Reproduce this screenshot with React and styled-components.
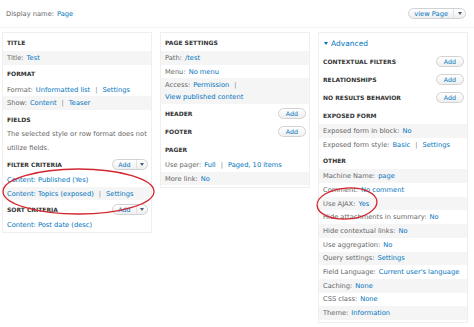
import React from "react";
import styled, { createGlobalStyle } from "styled-components";

const LINK = "#0074bd";

const GlobalStyle = createGlobalStyle`
  html, body {
    margin: 0;
    padding: 0;
    background: #fff;
  }
  body {
    font-family: "DejaVu Sans", Verdana, sans-serif;
    font-size: 6.7px;
    color: #666;
  }
`;

const Page = styled.div`
  position: relative;
  width: 474px;
  height: 327px;
  overflow: hidden;
`;

const TopBar = styled.div`
  display: flex;
  align-items: center;
  justify-content: space-between;
  height: 28px;
  padding: 0 8px 0 6px;
  border-bottom: 1px solid #f2f2f2;
  box-sizing: border-box;
`;

const Columns = styled.div`
  display: grid;
  grid-template-columns: repeat(3, 150px);
  column-gap: 8px;
  align-items: start;
  padding-left: 2px;
  margin-top: 4px;
`;

const Column = styled.section`
  border: 1px solid #efefef;
  background: #fff;
  padding-bottom: ${(p) => p.$pb || 0}px;
`;

const Heading = styled.div`
  display: flex;
  align-items: center;
  justify-content: space-between;
  height: 18px;
  padding: 0 3px 0 4px;
  font-size: 6px;
  font-weight: bold;
  color: #333;
  text-transform: uppercase;
`;

const Item = styled.div`
  min-height: 13.7px;
  box-sizing: border-box;
  line-height: 12px;
  padding: 0.85px 4px;
  background: ${(p) => (p.$alt ? "#f5f5f5" : "transparent")};
`;

const Description = styled.div`
  line-height: 13.5px;
  padding: 0 4px;
`;

const Value = styled.a`
  color: ${LINK};
  text-decoration: none;
  white-space: nowrap;
  margin-left: ${(p) => (p.$bare ? 0 : 3)}px;
`;

const Sep = styled.span`
  color: #888;
  margin: 0 5px;
`;

const Toggle = styled.div`
  display: flex;
  align-items: center;
  gap: 3px;
  height: 19px;
  padding: 1px 4px 0 5px;
  box-sizing: border-box;
  color: ${LINK};
  font-size: 7.5px;
`;

const Caret = styled.span`
  width: 0;
  height: 0;
  border-left: 2px solid transparent;
  border-right: 2px solid transparent;
  border-top: 3px solid ${(p) => p.$color || LINK};
`;

const Pill = styled.span`
  display: inline-flex;
  align-items: stretch;
  height: 11px;
  box-sizing: border-box;
  border: 1px solid #d2d2d2;
  border-radius: 6px;
  background: linear-gradient(#ffffff, #efefef);
  font-weight: normal;
  text-transform: none;
  font-size: ${(p) => p.$size || 6.3}px;
  color: ${LINK};
  overflow: hidden;
`;

const PillPart = styled.span`
  display: flex;
  align-items: center;
  padding: 0 ${(p) => p.$pad}px;
  & + & {
    border-left: 1px solid #e2e2e2;
  }
`;

const Annotations = styled.svg`
  position: absolute;
  left: 0;
  top: 0;
  pointer-events: none;
`;

const AddButton = ({ menu }) => (
  <Pill>
    <PillPart $pad={menu ? 5.5 : 7}>Add</PillPart>
    {menu && (
      <PillPart $pad={3}>
        <Caret $color="#4b5f73" />
      </PillPart>
    )}
  </Pill>
);

const Setting = ({ label, values = [], alt }) => (
  <Item $alt={alt}>
    {label && <span>{label}:</span>}
    {values.map((v, i) => (
      <React.Fragment key={v}>
        {i > 0 && <Sep>|</Sep>}
        <Value $bare={!label || i > 0}>{v}</Value>
      </React.Fragment>
    ))}
  </Item>
);

export default function App() {
  return (
    <Page>
      <GlobalStyle />
      <TopBar>
        <div>
          Display name:<Value>Page</Value>
        </div>
        <Pill $size={6.7}>
          <PillPart $pad={5}>view Page</PillPart>
          <PillPart $pad={3.5}>
            <Caret $color="#4b5f73" />
          </PillPart>
        </Pill>
      </TopBar>

      <Columns>
        <Column>
          <Heading>Title</Heading>
          <Setting label="Title" values={["Test"]} alt />
          <Heading>Format</Heading>
          <Setting label="Format" values={["Unformatted list", "Settings"]} />
          <Setting label="Show" values={["Content", "Teaser"]} alt />
          <Heading>Fields</Heading>
          <Description>
            The selected style or row format does not
            <br />
            utilize fields.
          </Description>
          <Heading>
            Filter criteria
            <AddButton menu />
          </Heading>
          <Setting values={["Content: Published (Yes)"]} />
          <Setting values={["Content: Topics (exposed)", "Settings"]} alt />
          <Heading>
            Sort criteria
            <AddButton menu />
          </Heading>
          <Setting values={["Content: Post date (desc)"]} />
        </Column>

        <Column $pb={2}>
          <Heading>Page settings</Heading>
          <Setting label="Path" values={["/test"]} alt />
          <Setting label="Menu" values={["No menu"]} />
          <Item $alt>
            <span>Access:</span>
            <Value>Permission</Value>
            <Sep>|</Sep>
            <br />
            <Value $bare>View published content</Value>
          </Item>
          <Heading>
            Header
            <AddButton />
          </Heading>
          <Heading>
            Footer
            <AddButton />
          </Heading>
          <Heading>Pager</Heading>
          <Setting label="Use pager" values={["Full", "Paged, 10 items"]} />
          <Setting label="More link" values={["No"]} alt />
        </Column>

        <Column $pb={2}>
          <Toggle>
            <Caret />
            Advanced
          </Toggle>
          <Heading>
            Contextual filters
            <AddButton />
          </Heading>
          <Heading>
            Relationships
            <AddButton />
          </Heading>
          <Heading>
            No results behavior
            <AddButton />
          </Heading>
          <Heading>Exposed form</Heading>
          <Setting label="Exposed form in block" values={["No"]} alt />
          <Setting label="Exposed form style" values={["Basic", "Settings"]} />
          <Heading>Other</Heading>
          <Setting label="Machine Name" values={["page"]} alt />
          <Setting label="Comment" values={["No comment"]} />
          <Setting label="Use AJAX" values={["Yes"]} alt />
          <Setting label="Hide attachments in summary" values={["No"]} />
          <Setting label="Hide contextual links" values={["No"]} alt />
          <Setting label="Use aggregation" values={["No"]} />
          <Setting label="Query settings" values={["Settings"]} alt />
          <Setting label="Field Language" values={["Current user's language"]} />
          <Setting label="Caching" values={["None"]} alt />
          <Setting label="CSS class" values={["None"]} />
          <Setting label="Theme" values={["Information"]} alt />
        </Column>
      </Columns>

      <Annotations width="474" height="327" viewBox="0 0 474 327">
        <g fill="none" stroke="#d4262e" strokeWidth="1.3">
          <ellipse cx="78.5" cy="191.5" rx="75.5" ry="22.5" />
          <ellipse cx="347" cy="203.5" rx="30" ry="15.5" transform="rotate(-4 347 203.5)" />
        </g>
      </Annotations>
    </Page>
  );
}
